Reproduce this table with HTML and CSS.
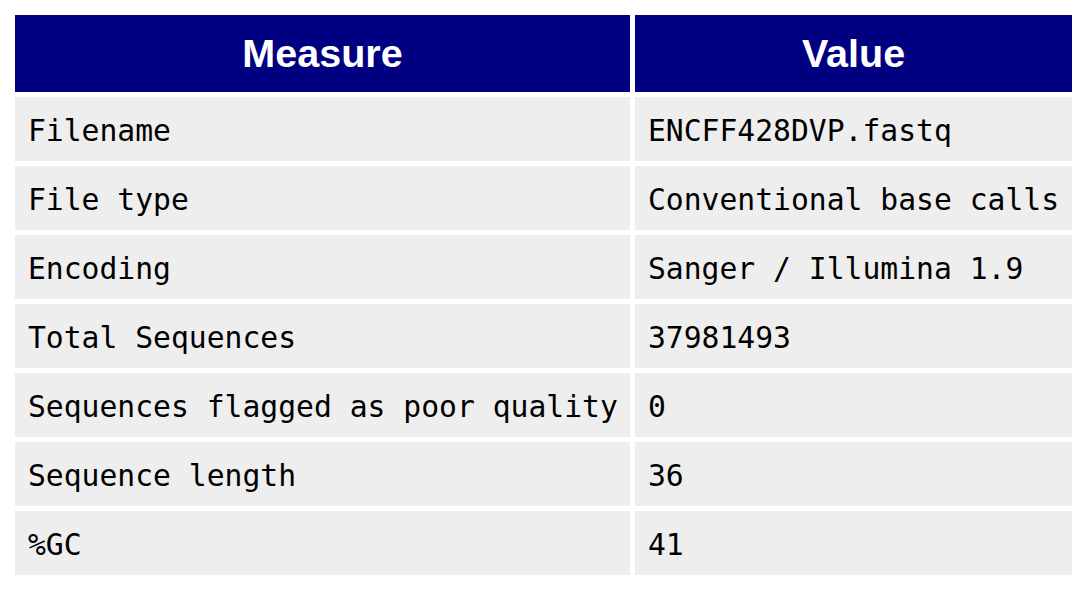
FILE: index.html
```html
<!DOCTYPE html>
<html>
<head>
<meta charset="utf-8">
<link rel="stylesheet" href="styles.css">
</head>
<body>
<table class="stats">
  <colgroup><col class="c1"><col class="c2"></colgroup>
  <thead>
    <tr><th>Measure</th><th>Value</th></tr>
  </thead>
  <tbody>
    <tr><td>Filename</td><td>ENCFF428DVP.fastq</td></tr>
    <tr><td>File type</td><td>Conventional base calls</td></tr>
    <tr><td>Encoding</td><td>Sanger / Illumina 1.9</td></tr>
    <tr><td>Total Sequences</td><td>37981493</td></tr>
    <tr><td>Sequences flagged as poor quality</td><td>0</td></tr>
    <tr><td>Sequence length</td><td>36</td></tr>
    <tr><td>%GC</td><td>41</td></tr>
  </tbody>
</table>
</body>
</html>
```
FILE: styles.css
```css
html, body {
  margin: 0;
  padding: 0;
  background: #ffffff;
}
body {
  padding: 10px;
}
.stats {
  border-collapse: separate;
  border-spacing: 5px;
  table-layout: fixed;
  width: 1067px;
}
.stats .c1 { width: 615px; }
.stats .c2 { width: 437px; }
.stats th {
  background: #000080;
  color: #ffffff;
  font-family: "Liberation Sans", Arial, sans-serif;
  font-weight: bold;
  font-size: 39.5px;
  height: 77px;
  padding: 0;
  text-align: center;
  vertical-align: middle;
}
.stats td {
  background: #eeeeee;
  color: #000000;
  font-family: "DejaVu Sans Mono", monospace;
  font-size: 29.7px;
  height: 62px;
  padding: 2px 0 0 13px;
  text-align: left;
  vertical-align: middle;
  white-space: nowrap;
  overflow: hidden;
}
```
